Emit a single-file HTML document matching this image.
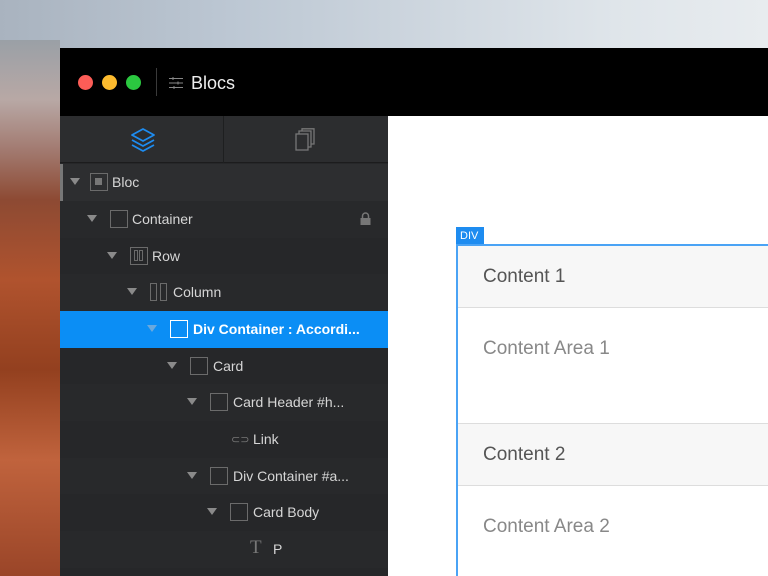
<!DOCTYPE html>
<html style="width:768px;height:576px;overflow:hidden"><head><style>
*{margin:0;padding:0;box-sizing:border-box}
body{width:768px;height:576px;overflow:hidden;position:relative;font-family:"Liberation Sans",sans-serif;
background:linear-gradient(180deg,#b9c2cc 0,#d7dde3 40px,#c9ccd0 60px,#8f6f66 180px,#a8502f 300px,#8e3f23 420px,#b55b3a 576px);}
.bgL{position:absolute;left:0;top:40px;width:60px;height:536px;background:linear-gradient(180deg,#9aa0a6 0,#b8a8a5 60px,#a27a70 110px,#8d4a33 160px,#b0532e 240px,#93401f 330px,#c0633d 420px,#9a4528 536px)}
.sky{position:absolute;left:0;top:0;width:768px;height:48px;background:linear-gradient(90deg,#a9b3bf,#bcc7d3 30%,#dfe5ea 80%,#e8ecef)}
.win{position:absolute;left:60px;top:48px;width:708px;height:528px;background:#000;overflow:hidden}
.title{position:absolute;left:0;top:0;width:708px;height:68px;background:#000}
.dot{position:absolute;top:27px;width:15px;height:15px;border-radius:50%}
.side{position:absolute;left:0;top:68px;width:328px;height:460px;background:#262729;overflow:hidden}
.tabs{position:absolute;left:0;top:0;width:328px;height:47px;background:#2c2d2f;border-bottom:1px solid #1c1c1d}
.row{position:absolute;left:0;width:328px;height:36.7px;color:#d6d6d6;font-size:14px}
.row span{position:absolute;top:10px}
.tri{position:absolute;top:14px;width:0;height:0;border-left:5px solid transparent;border-right:5px solid transparent;border-top:7px solid #8a8a8a}
.box{position:absolute;top:9px;width:18px;height:18px;border:1.5px solid #6b6b6b}
.canvas{position:absolute;left:328px;top:68px;width:380px;height:460px;background:#fff;overflow:hidden}
</style></head><body>
<div class="sky"></div><div class="bgL"></div>
<div class="win">
 <div class="title">
  <div class="dot" style="left:18px;background:#fc5d57"></div>
  <div class="dot" style="left:42px;background:#fdbb2e"></div>
  <div class="dot" style="left:66px;background:#2bc840"></div>
  <div style="position:absolute;left:96px;top:20px;width:1px;height:28px;background:#3a3a3a"></div>
  <svg style="position:absolute;left:109px;top:29px" width="14" height="12" stroke="#888" stroke-width="1"><path d="M0 1.5H14M0 6H14M0 10.5H14"/><path d="M4 0v3M9 4.5v3M5 9v3" stroke="#888"/></svg>
  <div style="position:absolute;left:131px;top:25px;color:#eee;font-size:18px">Blocs</div>
 </div>
 <div class="side">
  <div class="tabs">
   <div style="position:absolute;left:163px;top:0;width:1px;height:47px;background:#1e1f20"></div>
   <svg style="position:absolute;left:70px;top:11px" width="26" height="26" fill="none" stroke="#1e8cf0" stroke-width="1.8" stroke-linejoin="round"><path d="M13 2L24 8L13 14L2 8Z"/><path d="M2 13L13 19L24 13"/><path d="M2 18L13 24L24 18"/></svg>
   <svg style="position:absolute;left:234px;top:12px" width="22" height="24" fill="none" stroke="#777" stroke-width="1.3"><rect x="2" y="6" width="12" height="16"/><path d="M5 6V3H17V19H14M8 3V0.8H20V16H17"/></svg>
  </div>
  <div class="row" style="top:48px;background:#2d2e30;border-left:3px solid #777"><div class="tri" style="left:7px"></div><div class="box" style="left:27px"><div style="position:absolute;left:4px;top:4px;width:7px;height:7px;background:#777"></div></div><span style="left:49px">Bloc</span></div>
  <div class="row" style="top:85px;background:#28292b"><div class="tri" style="left:27px"></div><div class="box" style="left:50px"></div><span style="left:72px">Container</span>
   <svg style="position:absolute;left:300px;top:11px" width="11" height="13"><path d="M2.5 6V4a3 3 0 0 1 6 0v2" fill="none" stroke="#777" stroke-width="1.5"/><rect x="0.5" y="6" width="10" height="7" fill="#777"/></svg></div>
  <div class="row" style="top:122px;background:#262729"><div class="tri" style="left:47px"></div><div class="box" style="left:70px"><div style="position:absolute;left:3px;top:2px;width:4px;height:11px;border:1px solid #6b6b6b"></div><div style="position:absolute;left:8px;top:2px;width:4px;height:11px;border:1px solid #6b6b6b"></div></div><span style="left:92px">Row</span></div>
  <div class="row" style="top:158px;background:#28292b"><div class="tri" style="left:67px"></div><div style="position:absolute;left:90px;top:9px;width:7px;height:18px;border:1.5px solid #6b6b6b"></div><div style="position:absolute;left:100px;top:9px;width:7px;height:18px;border:1.5px solid #6b6b6b"></div><span style="left:113px">Column</span></div>
  <div class="row" style="top:195px;background:#0b8ef5;color:#fff;font-weight:bold"><div class="tri" style="left:87px;border-top-color:#6aa9de"></div><div class="box" style="left:110px;border-color:#fff"></div><span style="left:133px">Div Container : Accordi...</span></div>
  <div class="row" style="top:232px;background:#262729"><div class="tri" style="left:107px"></div><div class="box" style="left:130px"></div><span style="left:153px">Card</span></div>
  <div class="row" style="top:268px;background:#28292b"><div class="tri" style="left:127px"></div><div class="box" style="left:150px"></div><span style="left:173px">Card Header #h...</span></div>
  <div class="row" style="top:305px;background:#262729"><span style="left:171px;color:#777;font-size:11px;top:12px">⊂⊃</span><span style="left:193px">Link</span></div>
  <div class="row" style="top:342px;background:#28292b"><div class="tri" style="left:127px"></div><div class="box" style="left:150px"></div><span style="left:173px">Div Container #a...</span></div>
  <div class="row" style="top:378px;background:#262729"><div class="tri" style="left:147px"></div><div class="box" style="left:170px"></div><span style="left:193px">Card Body</span></div>
  <div class="row" style="top:415px;background:#28292b"><span style="left:190px;color:#777;font-size:19px;top:6px;font-family:'Liberation Serif',serif">T</span><span style="left:213px">P</span></div>
  <div class="row" style="top:452px;height:8px;background:#262729"></div>
 </div>
 <div class="canvas">
  <div style="position:absolute;left:68px;top:111px;width:28px;height:17px;background:#1e8cf0;color:#fff;font-size:11px;padding:3px 0 0 4px">DIV</div>
  <div style="position:absolute;left:68px;top:128px;width:312px;height:332px;border:2px solid #4aa3f5;border-right:none;border-bottom:none;background:#fff">
   <div style="position:absolute;left:0;top:0;width:310px;height:62px;background:#f7f7f7;border-bottom:1px solid #ddd"><span style="position:absolute;left:25px;top:20px;font-size:19px;color:#555">Content 1</span></div>
   <span style="position:absolute;left:25px;top:92px;font-size:19px;color:#888">Content Area 1</span>
   <div style="position:absolute;left:0;top:177px;width:310px;height:63px;background:#f7f7f7;border-top:1px solid #ddd;border-bottom:1px solid #ddd"><span style="position:absolute;left:25px;top:20px;font-size:19px;color:#555">Content 2</span></div>
   <span style="position:absolute;left:25px;top:270px;font-size:19px;color:#888">Content Area 2</span>
  </div>
 </div>
</div>
</body></html>
